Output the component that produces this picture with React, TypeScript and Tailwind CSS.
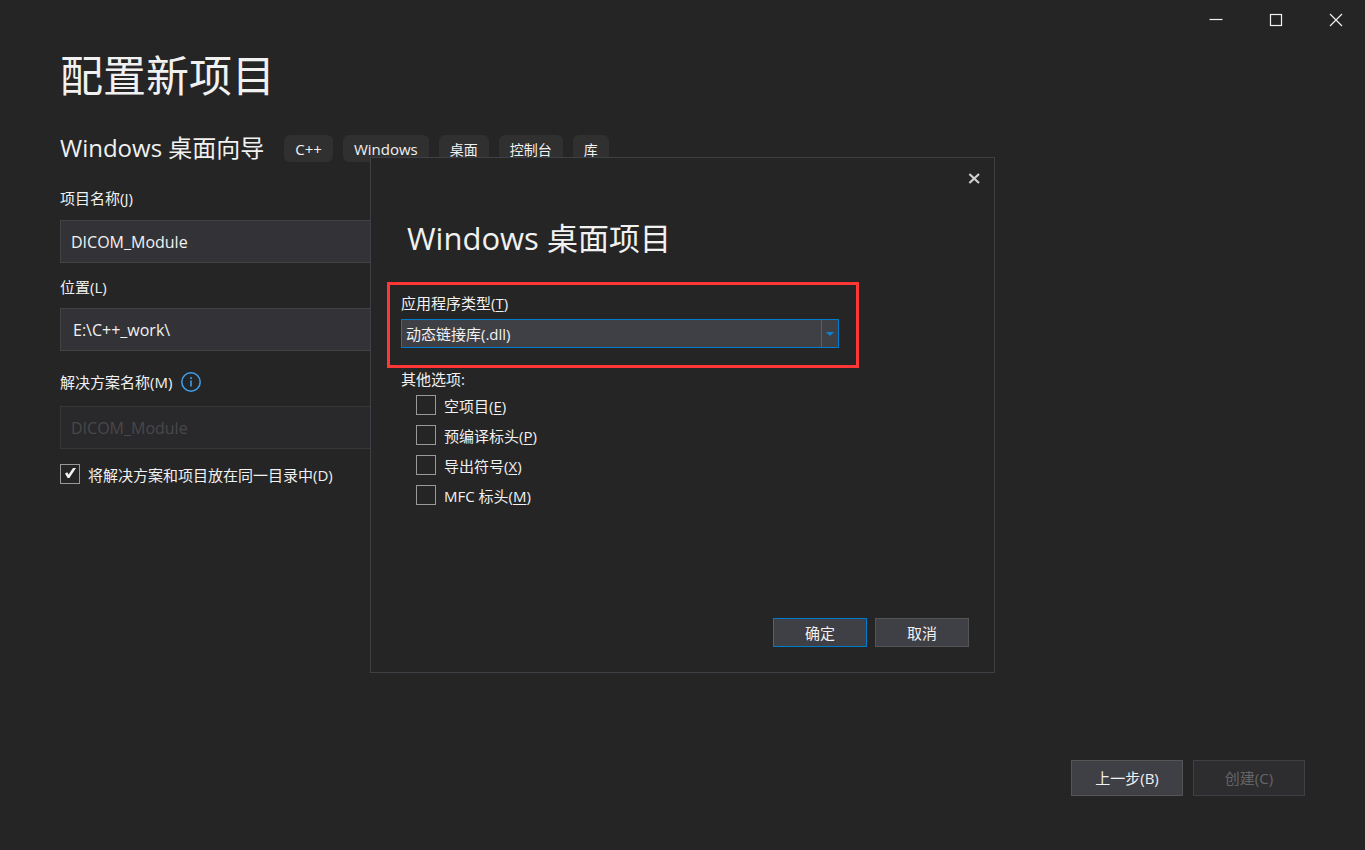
import type { ReactNode } from 'react'

const TAGS = [
  { text: 'C++', size: 'text-[15px]' },
  { text: 'Windows', size: 'text-[15px]' },
  { text: '桌面', size: 'text-[14px]' },
  { text: '控制台', size: 'text-[14px]' },
  { text: '库', size: 'text-[14px]' },
]

const OPTIONS = [
  { id: 'empty', text: '空项目', accessKey: 'E' },
  { id: 'pch', text: '预编译标头', accessKey: 'P' },
  { id: 'export', text: '导出符号', accessKey: 'X' },
  { id: 'mfc', text: 'MFC 标头', accessKey: 'M' },
]

function AccessKey({ children }: { children: string }) {
  return (
    <>
      (<span className="underline underline-offset-2">{children}</span>)
    </>
  )
}

function CheckBox({ id, defaultChecked }: { id: string; defaultChecked?: boolean }) {
  return (
    <span className="grid size-5 shrink-0">
      <input
        id={id}
        type="checkbox"
        defaultChecked={defaultChecked}
        className="peer col-start-1 row-start-1 size-5 appearance-none border border-[#999999] bg-[#252526]"
      />
      <svg
        viewBox="0 0 20 20"
        className="pointer-events-none invisible col-start-1 row-start-1 size-5 peer-checked:visible"
        fill="#f1f1f1"
      >
        <path d="M5 9.4 L7.2 8.2 L8.6 10.6 L13 4 L16 4 L9.4 14 L7.6 14 Z" />
      </svg>
    </span>
  )
}

function WindowButton({ label, children }: { label: string; children: ReactNode }) {
  return (
    <button type="button" aria-label={label} className="flex h-10 w-15 items-center justify-center">
      <svg width="14" height="14" viewBox="0 0 14 14" fill="none" stroke="#f1f1f1" strokeWidth="1.2">
        {children}
      </svg>
    </button>
  )
}

function TitleBar() {
  return (
    <header className="flex h-10 justify-end overflow-hidden">
      <div className="-mr-px flex">
        <WindowButton label="最小化">
          <path d="M0.5 6.5h13" />
        </WindowButton>
        <WindowButton label="最大化">
          <rect x="1.5" y="1.5" width="11" height="11" />
        </WindowButton>
        <WindowButton label="关闭">
          <path d="M1 1l12 12M13 1L1 13" />
        </WindowButton>
      </div>
    </header>
  )
}

function ProjectForm() {
  return (
    <form className="flex max-w-[800px] flex-col">
      <label htmlFor="name" className="mt-6 leading-6">
        项目名称(J)
      </label>
      <input
        id="name"
        defaultValue="DICOM_Module"
        className="mt-[10px] h-[43px] border border-[#434346] bg-[#333337] px-[10px] text-base"
      />

      <label htmlFor="location" className="mt-3 leading-6">
        位置(L)
      </label>
      <input
        id="location"
        defaultValue="E:\C++_work\"
        className="mt-[9px] h-[43px] border border-[#434346] bg-[#333337] px-3 text-base"
      />

      <div className="mt-[19px] flex items-center gap-[9px]">
        <label htmlFor="solution" className="leading-6">
          解决方案名称(M)
        </label>
        <svg width="20" height="20" viewBox="0 0 20 20" fill="none" stroke="#3fa0ee">
          <circle cx="10" cy="10" r="9.2" strokeWidth="1.5" />
          <path d="M10 8.5v6" strokeWidth="1.6" />
          <path d="M10 5.2v1.8" strokeWidth="1.8" />
        </svg>
      </div>
      <input
        id="solution"
        disabled
        defaultValue="DICOM_Module"
        className="mt-3 h-[43px] border border-[#37373a] bg-[#29292b] px-[10px] text-base text-[#48484a]"
      />

      <div className="mt-3 flex items-center gap-2">
        <CheckBox id="same-dir" defaultChecked />
        <label htmlFor="same-dir" className="pt-[2px] leading-6">
          将解决方案和项目放在同一目录中(D)
        </label>
      </div>
    </form>
  )
}

function DesktopProjectDialog() {
  return (
    <div className="fixed inset-0 flex items-center justify-center pb-5">
      <div
        role="dialog"
        aria-labelledby="dialog-title"
        className="flex min-h-[516px] w-full max-w-[625px] flex-col border border-[#3f3f46] bg-[#252526]"
      >
        <div className="flex h-10 items-center justify-end pr-3">
          <button type="button" aria-label="关闭" className="flex size-4 items-center justify-center">
            <svg width="12" height="12" viewBox="0 0 12 12" stroke="#d0d0d0" strokeWidth="2.2">
              <path d="M1.4 2l9.6 9M11 2L1.4 11" />
            </svg>
          </button>
        </div>

        <h2 id="dialog-title" className="mt-5 pl-9 text-[31px] leading-10">
          Windows 桌面项目
        </h2>

        {/* Highlighted field */}
        <div className="mt-6 mr-[135px] ml-4 flex flex-col border-3 border-[#ff3737] pt-[6px] pr-[17px] pb-[17px] pl-[11px]">
          <label htmlFor="app-type" className="leading-6">
            应用程序类型
            <AccessKey>T</AccessKey>
          </label>
          <div className="mt-1 grid">
            <select
              id="app-type"
              className="col-start-1 row-start-1 h-[29px] appearance-none border border-[#007acc] bg-[#3f3f46] pt-[2px] pr-5 pl-1"
            >
              <option>动态链接库(.dll)</option>
              <option>控制台应用程序(.exe)</option>
              <option>桌面应用程序(.exe)</option>
              <option>静态库(.lib)</option>
            </select>
            <span className="pointer-events-none col-start-1 row-start-1 flex w-[18px] items-center justify-center justify-self-end border border-[#007acc]">
              <svg width="8" height="4" viewBox="0 0 8 4" fill="#0e83d5">
                <path d="M0 0h8L4 4z" />
              </svg>
            </span>
          </div>
        </div>

        <fieldset className="pl-[30px]">
          <legend className="leading-[22px]">其他选项:</legend>
          <div className="flex flex-col pl-[15px]">
            {OPTIONS.map((option) => (
              <div key={option.id} className="flex h-[30px] items-center gap-2">
                <CheckBox id={option.id} />
                <label htmlFor={option.id} className="pt-[2px] leading-6">
                  {option.text}
                  <AccessKey>{option.accessKey}</AccessKey>
                </label>
              </div>
            ))}
          </div>
        </fieldset>

        <div className="mt-auto flex justify-end gap-2 pr-[25px] pb-[25px]">
          <button type="button" className="h-[29px] w-[94px] border border-[#007acc] bg-[#3f3f46] pt-[2px]">
            确定
          </button>
          <button type="button" className="h-[29px] w-[94px] border border-[#555555] bg-[#3f3f46] pt-[2px]">
            取消
          </button>
        </div>
      </div>
    </div>
  )
}

export default function App() {
  return (
    <div className="flex min-h-screen flex-col bg-[#252526] font-['Open_Sans','Noto_Sans_CJK_SC',sans-serif] text-[15px] text-[#f1f1f1]">
      <TitleBar />

      <main className="flex flex-1 flex-col px-15 pt-2 pb-[54px]">
        <h1 className="text-[43px] leading-14">配置新项目</h1>

        <div className="mt-[30px] flex h-7 items-center gap-5">
          <h2 className="text-[24px] leading-7">Windows 桌面向导</h2>
          <ul className="flex gap-[10px]">
            {TAGS.map((tag) => (
              <li
                key={tag.text}
                className={`flex h-[27px] items-center rounded-md bg-[#303031] px-[11px] pt-[2px] ${tag.size}`}
              >
                {tag.text}
              </li>
            ))}
          </ul>
        </div>

        <ProjectForm />

        <div className="mt-auto flex justify-end gap-[10px]">
          <button type="button" className="h-9 w-28 border border-[#555555] bg-[#3f3f46]">
            上一步(B)
          </button>
          <button type="button" disabled className="h-9 w-28 border border-[#3f3f46] bg-[#2d2d30] text-[#656565]">
            创建(C)
          </button>
        </div>
      </main>

      <DesktopProjectDialog />
    </div>
  )
}
